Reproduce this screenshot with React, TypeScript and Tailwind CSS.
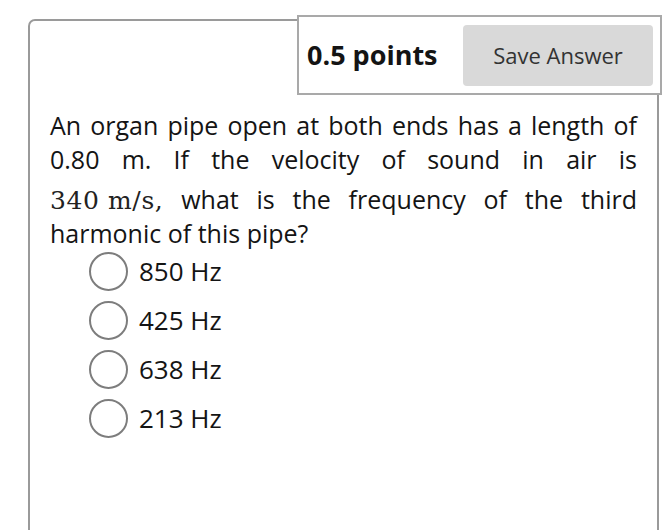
import React from "react";

const options = ["850 Hz", "425 Hz", "638 Hz", "213 Hz"];

export default function App() {
  return (
    <div className="relative h-[530px] w-[665px] overflow-hidden bg-white font-['Open_Sans',sans-serif] text-[#141414]">
      {/* question card */}
      <div className="ml-[28px] mt-[19px] h-[540px] w-[631px] rounded-t-[7px] border-2 border-b-0 border-[#9a9a9a] px-[20px] pt-[87px]">
        <div className="text-[25px] leading-[34px]">
          <div className="text-justify [text-align-last:justify]">
            An organ pipe open at both ends has a length of
          </div>
          <div className="text-justify [text-align-last:justify]">
            0.80 m. If the velocity of sound in air is
          </div>
          <div className="pt-[6px] text-justify [text-align-last:justify]">
            <span className="inline-block font-['DejaVu_Serif',serif] text-[25px] leading-none tracking-[0.6px] text-[#222]">
              340 m/s,
            </span>{" "}
            what is the frequency of the third
          </div>
          <div>harmonic of this pipe?</div>
        </div>

        <div className="mt-[2px] flex flex-col gap-[10px] pl-[39px]">
          {options.map((opt) => (
            <label key={opt} className="flex items-center gap-[11px]">
              <span className="h-[39px] w-[39px] rounded-full border-2 border-[#7d7d7d] bg-white" />
              <span className="text-[26px] leading-[39px]">{opt}</span>
            </label>
          ))}
        </div>
      </div>

      {/* points header overlapping the card border */}
      <div className="absolute left-[297px] top-[15px] flex h-[80px] w-[365px] items-center border-2 border-[#a9a9a9] bg-white pl-[8px] pr-[7px]">
        <span className="flex-1 text-[27px] font-bold">0.5 points</span>
        <button className="h-[61px] w-[190px] rounded-[4px] bg-[#d9d9d9] text-[22px] text-[#333]">
          Save Answer
        </button>
      </div>
    </div>
  );
}
